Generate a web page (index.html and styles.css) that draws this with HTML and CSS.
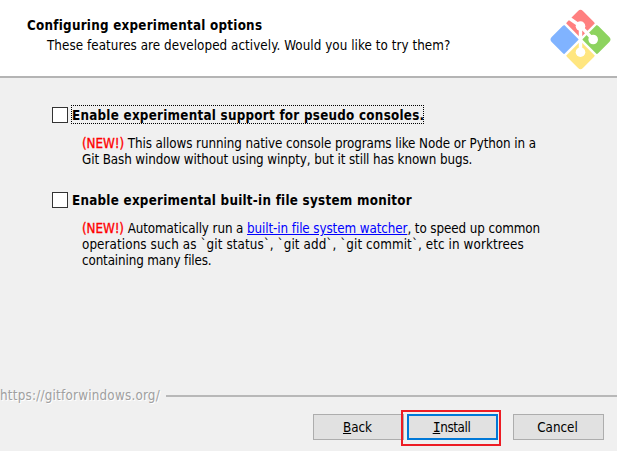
FILE: index.html
```
<!DOCTYPE html>
<html lang="en">
<head>
    <meta charset="UTF-8">
    <meta name="viewport" content="width=device-width, initial-scale=1.0">
    <title>Git Setup</title>
    <link rel="stylesheet" href="styles.css">
</head>
<body>

    <header class="header">
        <div class="header-text">
            <h1>Configuring experimental options</h1>
            <p class="subtitle">These features are developed actively. Would you like to try them?</p>
        </div>
        <svg class="logo" viewBox="4 4 178 178">
            <g stroke-width="20" stroke-linejoin="round">
                <path fill="#ff8080" stroke="#ff8080" d="M93 17L125 49L93 81L61 49Z"/>
                <path fill="#80b3ff" stroke="#80b3ff" d="M48 61L80 93L48 125L16 93Z"/>
                <path fill="#8dd35f" stroke="#8dd35f" d="M138 61L170 93L138 125L106 93Z"/>
                <path fill="#ffe680" stroke="#ffe680" d="M93 105L125 137L93 169L61 137Z"/>
            </g>
            <path stroke="#fff" stroke-width="7" d="M44 44L142 142M142 44L44 142"/>
            <g fill="none" stroke="#fff" stroke-width="10">
                <path d="M56 28L93 54L130 93"/>
                <path d="M93 54V130"/>
            </g>
            <g fill="#fff">
                <circle cx="93" cy="54" r="14"/>
                <circle cx="130" cy="93" r="14"/>
                <circle cx="93" cy="130" r="14"/>
            </g>
        </svg>
    </header>

    <main class="options">
        <section class="option">
            <label class="option-title"><input type="checkbox"><span class="name focused">Enable experimental support for pseudo consoles.</span></label>
            <p class="description">
                <span class="line line-1"><span class="new">(NEW!)</span> This allows running native console programs like Node or Python in a</span>
                <span class="line line-2">Git Bash window without using winpty, but it still has known bugs.</span>
            </p>
        </section>
        <section class="option">
            <label class="option-title"><input type="checkbox"><span class="name">Enable experimental built-in file system monitor</span></label>
            <p class="description">
                <span class="line line-3"><span class="new">(NEW!)</span> Automatically run a <a href="#">built-in file system watcher</a>, to speed up common</span>
                <span class="line line-4">operations such as `git status`, `git add`, `git commit`, etc in worktrees</span>
                <span class="line line-5">containing many files.</span>
            </p>
        </section>
    </main>

    <footer class="footer">
        <div class="divider"><span class="url">https://gitforwindows.org/</span></div>
        <div class="buttons">
            <button><u>B</u>ack</button>
            <div class="highlight"><button class="default"><u class="serif-i">I</u>nstall</button></div>
            <button>Cancel</button>
        </div>
    </footer>

</body>
</html>
```
FILE: styles.css
```
* {
    box-sizing: border-box;
}
body {
    margin: 0;
    width: 617px;
    height: 451px;
    display: flex;
    flex-direction: column;
    overflow: hidden;
    background-color: #f0f0f0;
    color: #000;
    font-family: "DejaVu Sans Condensed", "DejaVu Sans", sans-serif;
    font-stretch: condensed;
    font-size: 13.3px;
    line-height: 16px;
}
h1, p {
    margin: 0;
}
.header {
    display: flex;
    justify-content: space-between;
    height: 78px;
    padding: 9px 6px 0 27px;
    background-color: #fff;
    border-bottom: 2px solid #b4b4b4;
}
h1 {
    margin-top: 9px;
    font-size: 13.3px;
    line-height: 16px;
    letter-spacing: 0.25px;
}
.subtitle {
    margin: 4px 0 0 20px;
    letter-spacing: 0.06px;
}
.logo {
    width: 61px;
    height: 61px;
}
.options {
    flex: 1;
    padding: 27px 0 0 52px;
}
.option {
    height: 85px;
}
.option-title {
    display: flex;
    align-items: center;
    height: 19px;
    font-weight: bold;
    letter-spacing: 0.26px;
}
input {
    appearance: none;
    width: 16px;
    height: 16px;
    margin: 0 3px 0 0;
    background-color: #fff;
    border: 1px solid #333;
}
.name {
    height: 19px;
    padding: 3px 0 0 1px;
    white-space: nowrap;
}
.focused {
    outline: 1px dotted #000;
    outline-offset: -1px;
}
.description {
    padding: 12px 0 0 30px;
}
.line {
    display: block;
    white-space: nowrap;
}
.line-1 {
    letter-spacing: -0.08px;
}
.line-2 {
    letter-spacing: -0.1px;
}
.line-3 {
    letter-spacing: -0.09px;
}
.line-4 {
    letter-spacing: 0.1px;
}
.line-5 {
    letter-spacing: -0.13px;
}
.new {
    color: #f00;
    -webkit-text-stroke: 0.3px #f00;
}
a {
    color: #00f;
}
.footer {
    height: 64px;
}
.divider {
    display: flex;
    align-items: center;
    height: 17px;
}
.divider::after {
    content: "";
    flex: 1;
    height: 2px;
    margin-left: 6px;
    background-color: #b8b8b8;
}
.url {
    width: 160px;
    white-space: nowrap;
    color: #a0a0a0;
    text-shadow: 1px 1px #fff;
    letter-spacing: 0.23px;
}
.buttons {
    display: flex;
    justify-content: flex-end;
    align-items: flex-start;
    padding: 6px 13px 0 0;
}
button {
    width: 91px;
    height: 26px;
    margin-top: 4px;
    padding: 2px 2px 0 0;
    background-color: #e1e1e1;
    border: 1px solid #adadad;
    color: #000;
    font: inherit;
}
.highlight {
    width: 100px;
    height: 36px;
    margin: 0 12px 0 -3px;
    padding-left: 4px;
    border: 2px solid #ed1c24;
}
.highlight .default {
    display: block;
    margin-top: 2px;
    border: 2px solid #0078d7;
    letter-spacing: -0.4px;
}
.serif-i {
    font-family: "DejaVu Sans Mono", monospace;
}
```
